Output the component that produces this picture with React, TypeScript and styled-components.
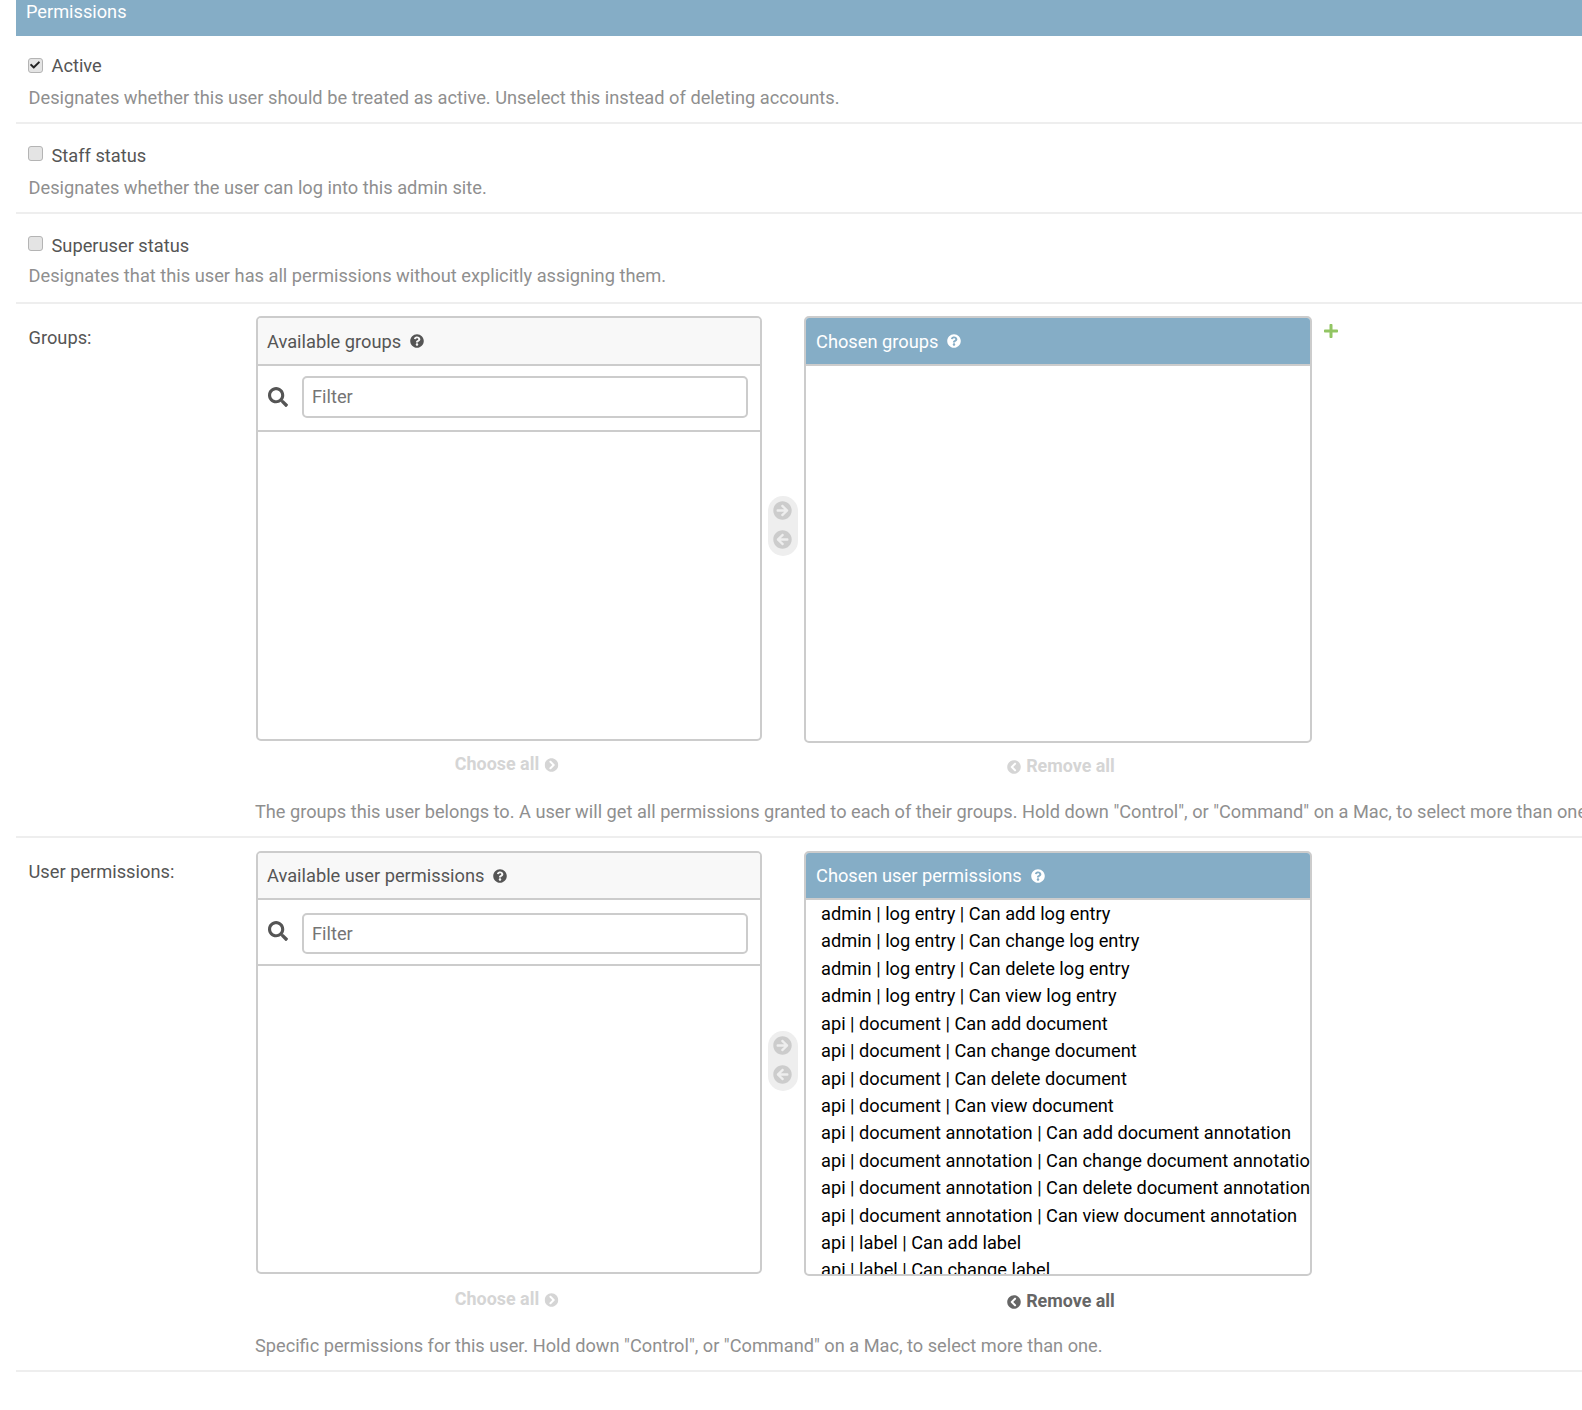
import React from "react";
import styled, { createGlobalStyle } from "styled-components";
import {
  FaArrowCircleLeft,
  FaArrowCircleRight,
  FaCheck,
  FaChevronCircleLeft,
  FaChevronCircleRight,
  FaPlus,
  FaQuestionCircle,
  FaSearch,
} from "react-icons/fa";

const GlobalStyle = createGlobalStyle`
  html, body {
    margin: 0;
    padding: 0;
    background: #fff;
    overflow: hidden;
  }
  body {
    font-family: Roboto, "Liberation Sans", sans-serif;
    color: #666;
  }
`;

const Page = styled.div`
  width: 1582px;
  height: 1410px;
  padding-left: 16px;
  box-sizing: border-box;
  overflow: hidden;
`;

const Heading = styled.h2`
  margin: 0;
  height: 36px;
  padding: 0 10px;
  box-sizing: border-box;
  background: #85adc6;
  color: #fff;
  font-size: 18.2px;
  font-weight: 400;
  line-height: 24px;
`;

const CheckRow = styled.div<{ $height: number; $top: number }>`
  height: ${(p) => p.$height}px;
  padding: ${(p) => p.$top}px 12.5px 0;
  box-sizing: border-box;
  border-bottom: 2px solid #eee;
`;

const CheckLine = styled.div`
  display: flex;
  align-items: center;
  height: 22px;
  gap: 9px;
  font-size: 18.25px;
  color: #555;
`;

const CheckBox = styled.span<{ $lift: number }>`
  display: flex;
  align-items: center;
  justify-content: center;
  width: 15px;
  height: 15px;
  margin-left: -1px;
  margin-top: ${(p) => -p.$lift}px;
  border: 1px solid #b4b4b4;
  border-radius: 3px;
  background: #e4e4e4;
  box-sizing: border-box;
  color: #222;
  font-size: 10px;
`;

const Help = styled.p<{ $gap?: number }>`
  margin: ${(p) => p.$gap ?? 11}px 0 0;
  font-size: 18.25px;
  line-height: 22px;
  color: #8f8f8f;
  white-space: nowrap;
`;

const FieldRow = styled.div`
  display: flex;
  padding: 12px 12.5px 0;
  box-sizing: border-box;
  border-bottom: 2px solid #eee;
  height: 534px;
`;

const FieldLabel = styled.label`
  width: 227.5px;
  flex: none;
  font-size: 18.25px;
  line-height: 22px;
  padding-top: 11px;
  color: #555;
`;

const FieldBody = styled.div<{ $top: number }>`
  display: flex;
  flex-direction: column;
  flex: none;
  width: 1300px;
  padding-top: ${(p) => p.$top}px;
`;

const Selector = styled.div`
  display: flex;
  align-items: flex-start;
`;

const Column = styled.div`
  display: flex;
  flex-direction: column;
  align-items: center;
  flex: none;
`;

const Box = styled.div<{ $width: number; $height: number }>`
  width: ${(p) => p.$width}px;
  height: ${(p) => p.$height}px;
  border: 2px solid #ccc;
  border-radius: 5px;
  box-sizing: border-box;
  overflow: hidden;
  display: flex;
  flex-direction: column;
`;

const BoxTitle = styled.div<{ $chosen?: boolean; $height: number }>`
  height: ${(p) => p.$height}px;
  flex: none;
  display: flex;
  align-items: center;
  gap: 9px;
  padding-left: ${(p) => (p.$chosen ? 10 : 9)}px;
  box-sizing: border-box;
  border-bottom: 2px solid #ccc;
  font-size: 18.25px;
  background: ${(p) => (p.$chosen ? "#85adc6" : "#f8f8f8")};
  color: ${(p) => (p.$chosen ? "#fff" : "#555")};
  svg {
    font-size: 14px;
  }
`;

const FilterRow = styled.div<{ $low?: boolean }>`
  height: 66px;
  flex: none;
  display: flex;
  align-items: center;
  gap: 14px;
  padding: ${(p) => (p.$low ? "2px 12px 0 10px" : "0 12px 3px 10px")};
  box-sizing: border-box;
  border-bottom: 2px solid #ccc;
  color: #555;
  svg {
    flex: none;
    font-size: 20px;
    margin-top: ${(p) => (p.$low ? -5 : 0)}px;
  }
`;

const FilterInput = styled.input<{ $height: number }>`
  flex: 1;
  min-width: 0;
  height: ${(p) => p.$height}px;
  padding: 0 8px;
  box-sizing: border-box;
  border: 2px solid #ccc;
  border-radius: 5px;
  font-family: inherit;
  font-size: 18.25px;
  outline: none;
  &::placeholder {
    color: #757575;
    opacity: 1;
  }
`;

const Options = styled.div`
  flex: 1;
  min-height: 0;
  overflow: hidden;
  padding-left: 15px;
`;

const Option = styled.div`
  font-size: 18.23px;
  line-height: 27.42px;
  color: #000;
  white-space: nowrap;
`;

const Mover = styled.div`
  flex: none;
  align-self: flex-start;
  width: 30px;
  height: 60px;
  margin: 180px 6.5px 0 5.5px;
  border-radius: 15px;
  background: #eee;
  display: flex;
  flex-direction: column;
  align-items: center;
  justify-content: space-between;
  padding: 5px 0 7px;
  box-sizing: border-box;
  color: #ccc;
  font-size: 19px;
`;

const AllLink = styled.div<{ $active?: boolean; $shift: number; $top: number }>`
  display: flex;
  align-items: center;
  gap: 5px;
  margin-top: ${(p) => p.$top}px;
  height: 22px;
  font-size: 17.9px;
  font-weight: 700;
  transform: translateX(${(p) => p.$shift}px);
  color: ${(p) => (p.$active ? "#666" : "#d5d5d5")};
  svg {
    font-size: 14px;
    margin-top: 3px;
  }
`;

const AddLink = styled.span`
  flex: none;
  margin: 7px 0 0 11px;
  color: #92c563;
  font-size: 16px;
  line-height: 16px;
`;

const FieldHelp = styled(Help)<{ $top: number }>`
  margin: ${(p) => p.$top}px 0 0 -1px;
  font-size: 18.2px;
`;

type FieldProps = {
  name: string;
  title: string;
  help: string;
  top: number;
  titleHeight: number;
  inputHeight: number;
  availableHeight: number;
  chosenHeight: number;
  linkTop: number;
  helpTop: number;
  lowFilter?: boolean;
  options?: string[];
  canRemove?: boolean;
  plus?: boolean;
};

function Field({
  name,
  title,
  help,
  top,
  titleHeight,
  inputHeight,
  availableHeight,
  chosenHeight,
  linkTop,
  helpTop,
  lowFilter,
  options = [],
  canRemove,
  plus,
}: FieldProps) {
  return (
    <FieldRow>
      <FieldLabel>{name}:</FieldLabel>
      <FieldBody $top={top}>
        <Selector>
          <Column>
            <Box $width={506} $height={availableHeight}>
              <BoxTitle $height={titleHeight}>
                Available {title} <FaQuestionCircle />
              </BoxTitle>
              <FilterRow $low={lowFilter}>
                <FaSearch />
                <FilterInput $height={inputHeight} placeholder="Filter" readOnly />
              </FilterRow>
            </Box>
            <AllLink $shift={-2.5} $top={linkTop}>
              Choose all <FaChevronCircleRight />
            </AllLink>
          </Column>
          <Mover>
            <FaArrowCircleRight />
            <FaArrowCircleLeft />
          </Mover>
          <Column>
            <Box $width={508} $height={chosenHeight}>
              <BoxTitle $chosen $height={titleHeight}>
                Chosen {title} <FaQuestionCircle />
              </BoxTitle>
              <Options>
                {options.map((o) => (
                  <Option key={o}>{o}</Option>
                ))}
              </Options>
            </Box>
            <AllLink $shift={3} $active={canRemove} $top={linkTop}>
              <FaChevronCircleLeft /> Remove all
            </AllLink>
          </Column>
          {plus && (
            <AddLink>
              <FaPlus />
            </AddLink>
          )}
        </Selector>
        <FieldHelp $top={helpTop}>{help}</FieldHelp>
      </FieldBody>
    </FieldRow>
  );
}

const permissions = [
  "admin | log entry | Can add log entry",
  "admin | log entry | Can change log entry",
  "admin | log entry | Can delete log entry",
  "admin | log entry | Can view log entry",
  "api | document | Can add document",
  "api | document | Can change document",
  "api | document | Can delete document",
  "api | document | Can view document",
  "api | document annotation | Can add document annotation",
  "api | document annotation | Can change document annotation",
  "api | document annotation | Can delete document annotation",
  "api | document annotation | Can view document annotation",
  "api | label | Can add label",
  "api | label | Can change label",
];

export default function App() {
  return (
    <Page>
      <GlobalStyle />
      <Heading>Permissions</Heading>
      <CheckRow $height={88} $top={18}>
        <CheckLine>
          <CheckBox $lift={0}>
            <FaCheck />
          </CheckBox>
          Active
        </CheckLine>
        <Help>Designates whether this user should be treated as active. Unselect this instead of deleting accounts.</Help>
      </CheckRow>
      <CheckRow $height={90} $top={20}>
        <CheckLine>
          <CheckBox $lift={4} />
          Staff status
        </CheckLine>
        <Help>Designates whether the user can log into this admin site.</Help>
      </CheckRow>
      <CheckRow $height={90} $top={20}>
        <CheckLine>
          <CheckBox $lift={4} />
          Superuser status
        </CheckLine>
        <Help $gap={9}>Designates that this user has all permissions without explicitly assigning them.</Help>
      </CheckRow>
      <Field
        name="Groups"
        title="groups"
        top={0}
        titleHeight={48}
        inputHeight={42}
        availableHeight={425}
        chosenHeight={427}
        linkTop={11}
        helpTop={25}
        plus
        help={'The groups this user belongs to. A user will get all permissions granted to each of their groups. Hold down "Control", or "Command" on a Mac, to select more than one.'}
      />
      <Field
        name="User permissions"
        title="user permissions"
        top={1}
        titleHeight={47}
        inputHeight={41}
        availableHeight={423}
        chosenHeight={425}
        linkTop={13}
        helpTop={24}
        lowFilter
        options={permissions}
        canRemove
        help={'Specific permissions for this user. Hold down "Control", or "Command" on a Mac, to select more than one.'}
      />
    </Page>
  );
}
